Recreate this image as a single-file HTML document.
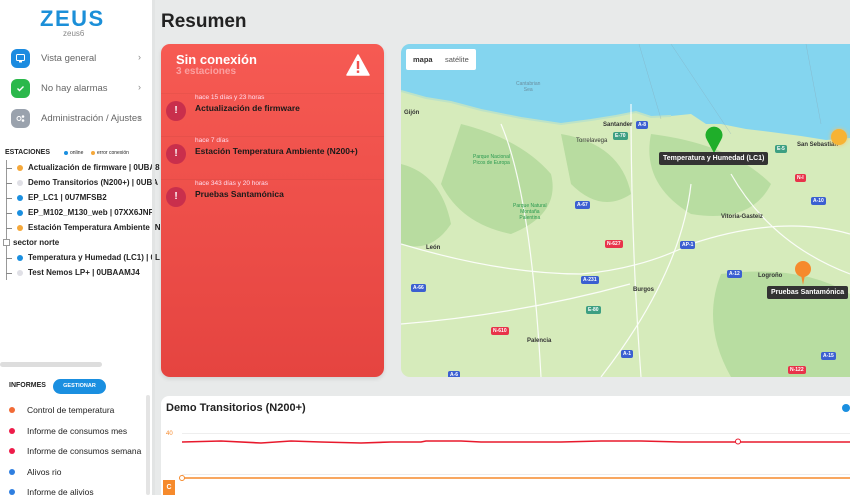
<!DOCTYPE html>
<html><head><meta charset="utf-8"><style>
*{margin:0;padding:0;box-sizing:border-box}
html{width:850px;height:495px;overflow:hidden}
body{width:850px;height:495px;overflow:hidden;background:#e8eaea;font-family:"Liberation Sans",sans-serif;position:relative;color:#222}
.side{position:absolute;left:0;top:0;width:152px;height:495px;background:#fff}
.gut{position:absolute;left:152px;top:0;width:3px;height:495px;background:#e2e4e4}
.logo{position:absolute;left:40px;top:6px;font-size:22px;font-weight:bold;color:#1b8fd8;letter-spacing:1.5px}
.sub{position:absolute;left:63px;top:29px;font-size:8px;color:#888}
.nav{position:absolute;left:11px;width:140px;height:20px}
.nav .ic{position:absolute;left:0;top:0;width:19px;height:19px;border-radius:6px}
.nav .t{position:absolute;left:30px;top:4px;font-size:9.5px;color:#666}
.nav .ar{position:absolute;left:127px;top:3px;font-size:9px;color:#888}
.st{position:absolute;font-size:8px;font-weight:bold;color:#222;white-space:nowrap}
.dot{position:absolute;width:6px;height:6px;border-radius:50%}
.tl{position:absolute;left:6px;height:1px;width:6px;background:#888}
.rep{position:absolute;left:27px;font-size:8.5px;color:#222;white-space:nowrap}
h1{position:absolute;left:161px;top:11px;font-size:19px;font-weight:bold;color:#222}
.red{position:absolute;left:161px;top:44px;width:223px;height:333px;border-radius:9px;background:linear-gradient(#f65a53,#e54440);box-shadow:0 2px 4px rgba(0,0,0,.1)}
.it{position:absolute;left:0;width:223px;height:42px;border-top:1px solid rgba(0,0,0,.04)}
.it .c{position:absolute;left:5px;top:7px;width:20px;height:20px;border-radius:50%;background:#c92f4c;color:#fff;font-size:10px;font-weight:bold;text-align:center;line-height:20px}
.it .h{position:absolute;left:34px;top:0;font-size:6.5px;color:#fde;white-space:nowrap}
.it .n{position:absolute;left:34px;top:9px;font-size:8.5px;font-weight:bold;color:#1a1a1a;white-space:nowrap}
.map{position:absolute;left:401px;top:44px;width:449px;height:333px;border-radius:9px 0 0 9px;overflow:hidden;background:#d6ebbb}
.ml{position:absolute;font-size:6px;color:#333}
.sh{position:absolute;font-size:5px;color:#fff;padding:1px 2px;border-radius:2px;font-weight:bold}
.b{background:#3b5fd1}.r{background:#e8334a}.g{background:#3d9f82}
.tag{position:absolute;background:#333;color:#fff;font-size:7px;font-weight:bold;padding:3px 4px;border-radius:2px;white-space:nowrap}
.chart{position:absolute;left:161px;top:396px;width:700px;height:110px;background:#fff;border-radius:8px}
</style></head><body>
<div class="side">
<div class="logo">ZEUS</div><div class="sub">zeus6</div>
<div class="nav" style="top:49px"><div class="ic" style="background:#1b8be0"></div><svg style="position:absolute;left:5px;top:5px" width="9" height="9"><rect x="0.5" y="0.5" width="8" height="6" rx="1" fill="none" stroke="#fff"/><rect x="3" y="7" width="3" height="1.5" fill="#fff"/></svg><div class="t">Vista general</div><div class="ar">›</div></div>
<div class="nav" style="top:79px"><div class="ic" style="background:#2bb84b"></div><svg style="position:absolute;left:5px;top:5px" width="9" height="9"><path d="M1.5 4.5l2 2 4-4" fill="none" stroke="#fff" stroke-width="1.4"/></svg><div class="t">No hay alarmas</div><div class="ar">›</div></div>
<div class="nav" style="top:109px"><div class="ic" style="background:#9aa2ad"></div><svg style="position:absolute;left:5px;top:5px" width="9" height="9"><circle cx="3" cy="4.5" r="2" fill="none" stroke="#fff"/><circle cx="7" cy="2.5" r="1.3" fill="#fff"/><circle cx="7" cy="6.5" r="1.3" fill="#fff"/></svg><div class="t">Administración / Ajustes</div><div class="ar">›</div></div>
<div class="st" style="left:5px;top:149px;font-size:7px">ESTACIONES</div>
<div class="dot" style="left:64px;top:151px;width:4px;height:4px;background:#1a8fe0"></div><div class="st" style="left:70px;top:150px;font-size:5px;font-weight:normal">online</div>
<div class="dot" style="left:91px;top:151px;width:4px;height:4px;background:#f5a83a"></div><div class="st" style="left:97px;top:150px;font-size:5px;font-weight:normal">error conexión</div>
<div style="position:absolute;left:6px;top:160px;width:1px;height:120px;background:#999"></div>
<div class="tl" style="top:168px"></div><div class="dot" style="left:17px;top:165px;background:#f5a83a"></div><div class="st" style="left:28px;top:163px">Actualización de firmware | 0UBA8</div>
<div class="tl" style="top:183px"></div><div class="dot" style="left:17px;top:180px;background:#e0e0e6"></div><div class="st" style="left:28px;top:178px">Demo Transitorios (N200+) | 0UBA</div>
<div class="tl" style="top:198px"></div><div class="dot" style="left:17px;top:195px;background:#1a8fe0"></div><div class="st" style="left:28px;top:193px">EP_LC1 | 0U7MFSB2</div>
<div class="tl" style="top:213px"></div><div class="dot" style="left:17px;top:210px;background:#1a8fe0"></div><div class="st" style="left:28px;top:208px">EP_M102_M130_web | 07XX6JNF</div>
<div class="tl" style="top:228px"></div><div class="dot" style="left:17px;top:225px;background:#f5a83a"></div><div class="st" style="left:28px;top:223px">Estación Temperatura Ambiente (N</div>
<div style="position:absolute;left:3px;top:239px;width:7px;height:7px;border:1px solid #999;background:#fff"></div><div class="st" style="left:13px;top:238px">sector norte</div>
<div class="tl" style="top:258px"></div><div class="dot" style="left:17px;top:255px;background:#1a8fe0"></div><div class="st" style="left:28px;top:253px">Temperatura y Humedad (LC1) | 0L</div>
<div class="tl" style="top:273px"></div><div class="dot" style="left:17px;top:270px;background:#e0e0e6"></div><div class="st" style="left:28px;top:268px">Test Nemos LP+ | 0UBAAMJ4</div>
<div style="position:absolute;left:0;top:362px;width:102px;height:5px;border-radius:3px;background:#ddd"></div>
<div class="st" style="left:9px;top:382px;font-size:7px">INFORMES</div>
<div style="position:absolute;left:53px;top:379px;width:53px;height:15px;border-radius:8px;background:#1a8fe0;color:#fff;font-size:5.5px;font-weight:bold;text-align:center;line-height:15px">GESTIONAR</div>
<div style="position:absolute;left:146px;top:395px;width:4px;height:100px;border-radius:2px;background:#e4e4e4"></div>
<div class="dot" style="left:9px;top:407px;background:#f26b36"></div><div class="rep" style="top:405px">Control de temperatura</div>
<div class="dot" style="left:9px;top:428px;background:#ee1c4a"></div><div class="rep" style="top:426px">Informe de consumos mes</div>
<div class="dot" style="left:9px;top:448px;background:#ee1c4a"></div><div class="rep" style="top:446px">Informe de consumos semana</div>
<div class="dot" style="left:9px;top:469px;background:#2f7fe0"></div><div class="rep" style="top:467px">Alivos rio</div>
<div class="dot" style="left:9px;top:489px;background:#2f7fe0"></div><div class="rep" style="top:487px">Informe de alivios</div>
</div>
<div class="gut"></div>
<h1>Resumen</h1>
<div class="red">
<div style="position:absolute;left:15px;top:8px;font-size:13px;font-weight:bold;color:#fff">Sin conexión</div>
<div style="position:absolute;left:15px;top:22px;font-size:10px;font-weight:bold;color:#fba0a0">3 estaciones</div>
<svg style="position:absolute;left:185px;top:10px" width="24" height="22"><path d="M12 1L23 21H1Z" fill="#fff" stroke="#fff" stroke-linejoin="round" stroke-width="1.5"/><rect x="10.8" y="7" width="2.4" height="8" fill="#f0524f"/><rect x="10.8" y="16.5" width="2.4" height="2.4" fill="#f0524f"/></svg>
<div class="it" style="top:49px"><div class="c">!</div><div class="h">hace 15 días y 23 horas</div><div class="n">Actualización de firmware</div></div>
<div class="it" style="top:92px"><div class="c">!</div><div class="h">hace 7 días</div><div class="n">Estación Temperatura Ambiente (N200+)</div></div>
<div class="it" style="top:135px"><div class="c">!</div><div class="h">hace 343 días y 20 horas</div><div class="n">Pruebas Santamónica</div></div>
</div>
<div class="map">
<svg width="449" height="333" style="position:absolute;left:0;top:0">
<path d="M0 0H449V94L425 96L400 92L370 88L345 85L320 80L305 80L290 70L270 72L250 73L235 68L215 72L190 76L160 80L120 74L80 66L50 58L25 54L0 47Z" fill="#84d5ef"/>
<path d="M0 47L25 54L50 58L80 66L120 74L160 80L190 76L215 72L235 68L250 73L270 72" fill="none" stroke="#bde3c7" stroke-width="2"/>
<g fill="#b3da9c" opacity=".85"><path d="M60 80Q120 95 150 130Q160 170 110 190Q60 180 40 140Z"/><path d="M250 90Q330 100 370 140Q350 180 290 170Q240 140 250 90Z"/><path d="M320 230Q400 220 449 250V333H330Q300 280 320 230Z"/><path d="M0 120Q40 130 50 180Q30 210 0 200Z"/><path d="M160 90Q220 100 230 150Q200 170 170 140Z"/></g>
<g fill="none" stroke="#fff" stroke-width="1.2" opacity=".9"><path d="M0 200Q100 230 180 230Q240 225 290 200Q380 170 449 190"/><path d="M100 80Q130 150 140 333"/><path d="M230 60Q230 200 240 333"/><path d="M290 140Q280 230 200 333"/><path d="M0 280Q120 270 229 240"/><path d="M330 130Q370 200 449 230"/></g>
<g fill="none" stroke="#8ab" stroke-width=".5" opacity=".6"><path d="M238 0L260 75"/><path d="M270 0L330 90"/><path d="M405 0L420 80"/></g>
</svg>
<div style="position:absolute;left:5px;top:5px;width:70px;height:21px;background:#fff;border-radius:2px"></div>
<div class="ml" style="left:12px;top:11px;font-size:7.5px;font-weight:bold;color:#333">mapa</div>
<div class="ml" style="left:44px;top:11px;font-size:7.5px;color:#555">satélite</div>
<div class="ml" style="left:115px;top:37px;color:#6a8fa0;text-align:center;font-size:5px">Cantabrian<br>Sea</div>
<div class="ml" style="left:3px;top:66px;font-weight:bold">Gijón</div>
<div class="ml" style="left:202px;top:78px;font-weight:bold">Santander</div>
<div class="ml" style="left:175px;top:94px">Torrelavega</div>
<div class="ml" style="left:72px;top:110px;color:#2a9a50;text-align:center;font-size:5px">Parque Nacional<br>Picos de Europa</div>
<div class="ml" style="left:112px;top:159px;color:#2a9a50;text-align:center;font-size:5px">Parque Natural<br>Montaña<br>Palentina</div>
<div class="ml" style="left:320px;top:170px;font-weight:bold">Vitoria-Gasteiz</div>
<div class="ml" style="left:396px;top:98px;font-weight:bold">San Sebastián</div>
<div class="ml" style="left:25px;top:201px;font-weight:bold">León</div>
<div class="ml" style="left:232px;top:243px;font-weight:bold">Burgos</div>
<div class="ml" style="left:357px;top:229px;font-weight:bold">Logroño</div>
<div class="ml" style="left:126px;top:294px;font-weight:bold">Palencia</div>
<span class="sh b" style="left:235px;top:77px">A-8</span><span class="sh g" style="left:212px;top:88px">E-70</span><span class="sh b" style="left:174px;top:157px">A-67</span><span class="sh r" style="left:204px;top:196px">N-627</span><span class="sh b" style="left:279px;top:197px">AP-1</span><span class="sh b" style="left:326px;top:226px">A-12</span><span class="sh b" style="left:180px;top:232px">A-231</span><span class="sh b" style="left:10px;top:240px">A-66</span><span class="sh g" style="left:185px;top:262px">E-80</span><span class="sh r" style="left:90px;top:283px">N-610</span><span class="sh b" style="left:220px;top:306px">A-1</span><span class="sh b" style="left:47px;top:327px">A-6</span><span class="sh b" style="left:420px;top:308px">A-15</span><span class="sh r" style="left:387px;top:322px">N-122</span><span class="sh b" style="left:410px;top:153px">A-10</span><span class="sh r" style="left:394px;top:130px">N-I</span><span class="sh g" style="left:374px;top:101px">E-5</span>
<svg style="position:absolute;left:303px;top:82px" width="20" height="28"><path d="M10 27L3 14A8.5 8.5 0 1 1 17 14Z" fill="#1fae2a"/></svg>
<div class="tag" style="left:258px;top:108px">Temperatura y Humedad (LC1)</div>
<svg style="position:absolute;left:393px;top:216px" width="18" height="26"><circle cx="9" cy="9" r="8" fill="#f68a2c"/><path d="M7 15L9 25L11 15Z" fill="#f68a2c"/></svg>
<div class="tag" style="left:366px;top:242px">Pruebas Santamónica</div>
<div style="position:absolute;left:430px;top:85px;width:16px;height:16px;border-radius:50%;background:#f7b334;box-shadow:0 0 4px #f9c060"></div>
</div>
<div class="chart">
<div style="position:absolute;left:5px;top:6px;font-size:11px;font-weight:bold;color:#222">Demo Transitorios (N200+)</div>
<div style="position:absolute;left:681px;top:8px;width:8px;height:8px;border-radius:50%;background:#1a8fe0"></div>
<div style="position:absolute;left:5px;top:35px;font-size:6px;color:#f68a2c">40</div>
<div style="position:absolute;left:21px;top:37px;width:680px;height:1px;background:#eee"></div>
<div style="position:absolute;left:21px;top:78px;width:680px;height:1px;background:#eee"></div>
<svg style="position:absolute;left:0;top:0" width="700" height="110"><path d="M21 46L60 45L100 47L130 45L160 46L200 47L230 46L260 46L265 45L300 45L320 46L400 46L440 45L480 45L520 46L700 46" fill="none" stroke="#e8192c" stroke-width="1.6"/><circle cx="577" cy="45.5" r="2.5" fill="#fff" stroke="#e8192c"/><path d="M21 82H700" stroke="#f68a2c" stroke-width="1.4"/><circle cx="21" cy="82" r="2.5" fill="#fff" stroke="#f68a2c"/></svg>
<div style="position:absolute;left:2px;top:84px;width:12px;height:16px;background:#f68a2c;color:#fff;font-size:7px;font-weight:bold;text-align:center;line-height:16px">C</div>
</div>
</body></html>
